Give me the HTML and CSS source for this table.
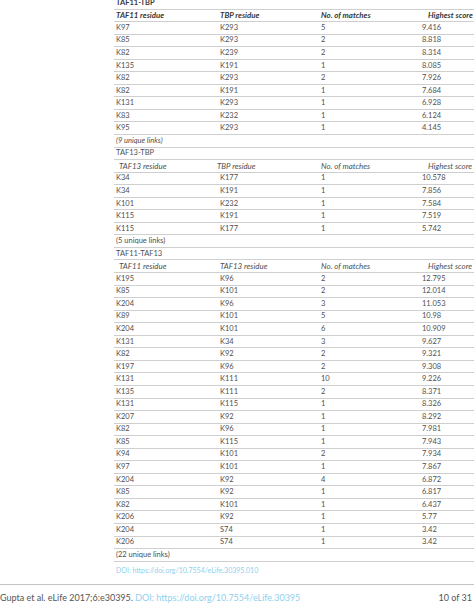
FILE: index.html
```html
<!DOCTYPE html>
<html>
<head>
<meta charset="utf-8">
<link rel="stylesheet" href="styles.css">
</head>
<body>
<div class="page">
  <div class="table">
    <div class="row title strong"><span>TAF11-TBP</span></div>
    <div class="row head strong"><span>TAF11 residue</span><span>TBP residue</span><span>No. of matches</span><span class="s">Highest score</span></div>
    <div class="row"><span>K97</span><span>K293</span><span>5</span><span>9.416</span></div>
    <div class="row"><span>K85</span><span>K293</span><span>2</span><span>8.818</span></div>
    <div class="row"><span>K82</span><span>K239</span><span>2</span><span>8.314</span></div>
    <div class="row"><span>K135</span><span>K191</span><span>1</span><span>8.085</span></div>
    <div class="row"><span>K82</span><span>K293</span><span>2</span><span>7.926</span></div>
    <div class="row"><span>K82</span><span>K191</span><span>1</span><span>7.684</span></div>
    <div class="row"><span>K131</span><span>K293</span><span>1</span><span>6.928</span></div>
    <div class="row"><span>K83</span><span>K232</span><span>1</span><span>6.124</span></div>
    <div class="row"><span>K95</span><span>K293</span><span>1</span><span>4.145</span></div>
    <div class="row note slant"><span>(9 unique links)</span></div>
    <div class="row title"><span>TAF13-TBP</span></div>
    <div class="row head"><span class="i1">TAF13 residue</span><span class="i2">TBP residue</span><span>No. of matches</span><span class="s">Highest score</span></div>
    <div class="row"><span>K34</span><span>K177</span><span>1</span><span>10.578</span></div>
    <div class="row"><span>K34</span><span>K191</span><span>1</span><span>7.856</span></div>
    <div class="row"><span>K101</span><span>K232</span><span>1</span><span>7.584</span></div>
    <div class="row"><span>K115</span><span>K191</span><span>1</span><span>7.519</span></div>
    <div class="row"><span>K115</span><span>K177</span><span>1</span><span>5.742</span></div>
    <div class="row note"><span>(5 unique links)</span></div>
    <div class="row title"><span>TAF11-TAF13</span></div>
    <div class="row head"><span class="i1">TAF11 residue</span><span>TAF13 residue</span><span>No. of matches</span><span class="s">Highest score</span></div>
    <div class="row"><span>K195</span><span>K96</span><span>2</span><span>12.795</span></div>
    <div class="row"><span>K85</span><span>K101</span><span>2</span><span>12.014</span></div>
    <div class="row"><span>K204</span><span>K96</span><span>3</span><span>11.053</span></div>
    <div class="row"><span>K89</span><span>K101</span><span>5</span><span>10.98</span></div>
    <div class="row"><span>K204</span><span>K101</span><span>6</span><span>10.909</span></div>
    <div class="row"><span>K131</span><span>K34</span><span>3</span><span>9.627</span></div>
    <div class="row"><span>K82</span><span>K92</span><span>2</span><span>9.321</span></div>
    <div class="row"><span>K197</span><span>K96</span><span>2</span><span>9.308</span></div>
    <div class="row"><span>K131</span><span>K111</span><span>10</span><span>9.226</span></div>
    <div class="row"><span>K135</span><span>K111</span><span>2</span><span>8.371</span></div>
    <div class="row"><span>K131</span><span>K115</span><span>1</span><span>8.326</span></div>
    <div class="row"><span>K207</span><span>K92</span><span>1</span><span>8.292</span></div>
    <div class="row"><span>K82</span><span>K96</span><span>1</span><span>7.981</span></div>
    <div class="row"><span>K85</span><span>K115</span><span>1</span><span>7.943</span></div>
    <div class="row"><span>K94</span><span>K101</span><span>2</span><span>7.934</span></div>
    <div class="row"><span>K97</span><span>K101</span><span>1</span><span>7.867</span></div>
    <div class="row"><span>K204</span><span>K92</span><span>4</span><span>6.872</span></div>
    <div class="row"><span>K85</span><span>K92</span><span>1</span><span>6.817</span></div>
    <div class="row"><span>K82</span><span>K101</span><span>1</span><span>6.437</span></div>
    <div class="row"><span>K206</span><span>K92</span><span>1</span><span>5.77</span></div>
    <div class="row"><span>K204</span><span>S74</span><span>1</span><span>3.42</span></div>
    <div class="row"><span>K206</span><span>S74</span><span>1</span><span>3.42</span></div>
    <div class="row note"><span>(22 unique links)</span></div>
  </div>
  <div class="doi">DOI: https://doi.org/10.7554/eLife.30395.010</div>
  <div class="footer">
    <span>Gupta et al. eLife 2017;6:e30395. <span class="link">DOI: https://doi.org/10.7554/eLife.30395</span></span>
    <span>10 of 31</span>
  </div>
</div>
</body>
</html>
```

FILE: styles.css
```css
html, body {
  margin: 0;
  padding: 0;
  background: #ffffff;
  overflow: hidden;
}
body {
  width: 474px;
  height: 608px;
  font-family: "Lato", "Noto Sans", sans-serif;
  color: #4f4f4f;
}
.page {
  display: flex;
  flex-direction: column;
}
.table {
  margin-top: -3px;
  margin-left: 114px;
  width: 400px;
  display: flex;
  flex-direction: column;
}
.row {
  box-sizing: border-box;
  height: 12.56px;
  border-bottom: 1.5px solid #cfcfcf;
  display: grid;
  grid-template-columns: 104px 101px 101px auto;
  align-items: center;
  font-size: 7.5px;
  line-height: 10px;
}
.row > span {
  padding-left: 2px;
  white-space: nowrap;
}
.head {
  font-style: italic;
  font-size: 7.9px;
}
.head .s {
  padding-left: 8px;
}
.head .i1 {
  padding-left: 5px;
}
.head .i2 {
  margin-left: -3px;
}
.strong {
  font-weight: 700;
  color: #383838;
}
.title, .note {
  display: flex;
}
.slant span {
  font-style: italic;
}
.doi {
  margin-left: 116px;
  margin-top: 3px;
  font-size: 7px;
  line-height: 10px;
  color: #8fd0ee;
}
.footer {
  margin-top: 9px;
  border-top: 1.5px solid #c4c4c4;
  display: flex;
  justify-content: space-between;
  padding: 7px 2px 0 0;
  font-size: 9px;
  line-height: 12px;
  color: #555;
}
.footer .link {
  color: #8fd0ee;
}
```
